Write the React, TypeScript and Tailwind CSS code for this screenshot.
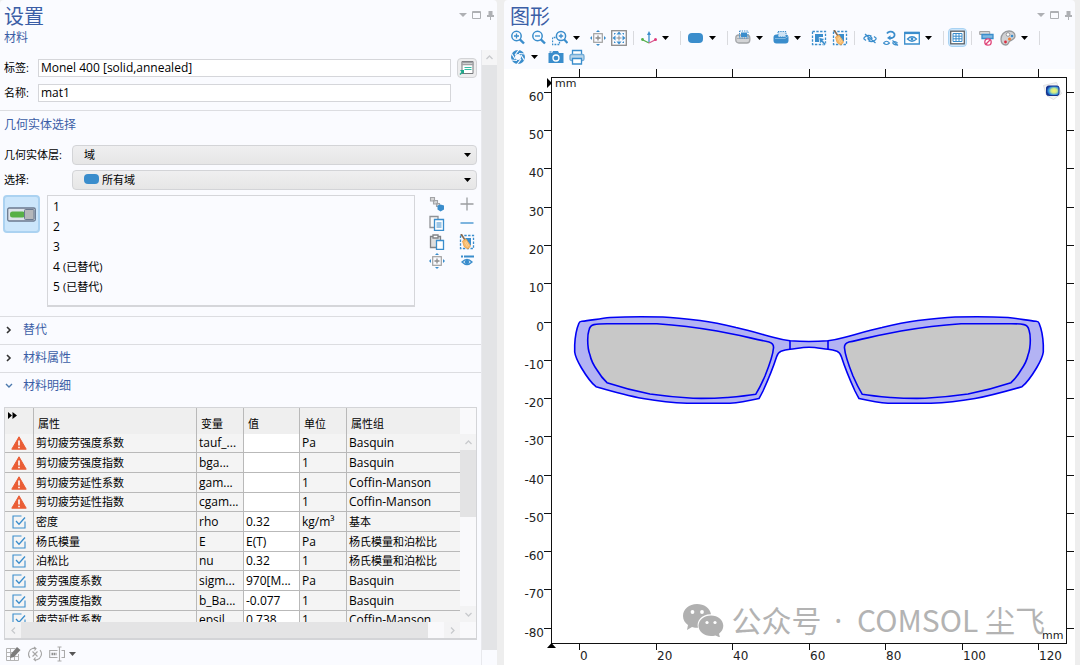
import React, {useState} from 'react';

const BLUE = '#3a8dcc';

const sections = ['替代', '材料属性'];

const rows = [
	{ok: false, name: '剪切疲劳强度系数', variable: 'tauf_...', value: '', unit: 'Pa', group: 'Basquin'},
	{ok: false, name: '剪切疲劳强度指数', variable: 'bga...', value: '', unit: '1', group: 'Basquin'},
	{ok: false, name: '剪切疲劳延性系数', variable: 'gam...', value: '', unit: '1', group: 'Coffin-Manson'},
	{ok: false, name: '剪切疲劳延性指数', variable: 'cgam...', value: '', unit: '1', group: 'Coffin-Manson'},
	{ok: true, name: '密度', variable: 'rho', value: '0.32', unit: 'kg/m³', group: '基本', cjk: true},
	{ok: true, name: '杨氏模量', variable: 'E', value: 'E(T)', unit: 'Pa', group: '杨氏模量和泊松比', cjk: true},
	{ok: true, name: '泊松比', variable: 'nu', value: '0.32', unit: '1', group: '杨氏模量和泊松比', cjk: true},
	{ok: true, name: '疲劳强度系数', variable: 'sigm...', value: '970[M...', unit: 'Pa', group: 'Basquin'},
	{ok: true, name: '疲劳强度指数', variable: 'b_Ba...', value: '-0.077', unit: '1', group: 'Basquin'},
	{ok: true, name: '疲劳延性系数', variable: 'epsil...', value: '0.738', unit: '1', group: 'Coffin-Manson'},
];

const Icon = ({children}: {children: React.ReactNode}) => (
	<svg className="h-4 w-4 shrink-0" viewBox="0 0 16 16" fill="none" stroke={BLUE} strokeWidth="1.3">
		{children}
	</svg>
);

const Caret = () => (
	<svg className="h-1 w-[7px]" viewBox="0 0 7 4"><path d="M0 0h7L3.5 4z" fill="#000" /></svg>
);

const Tool = ({label, menu, children}: {label: string; menu?: boolean; children: React.ReactNode}) => (
	<div className="flex h-[19px] items-center">
		<button aria-label={label} className="flex h-[19px] w-[21px] items-center justify-center">{children}</button>
		{menu && (
			<button aria-label={label + '菜单'} className="flex h-[19px] w-[17px] items-center pl-[3px]"><Caret /></button>
		)}
	</div>
);

const Divider = () => <span className="mx-1 h-[14px] w-px self-center bg-[#d9dade]" />;

const WindowButtons = () => (
	<div className="flex h-[30px] items-center gap-[5px] pr-[2px]">
		<button aria-label="菜单"><svg className="block h-1 w-2" viewBox="0 0 8 4"><path d="M0 0h8L4 4z" fill="#aeb0b4" /></svg></button>
		<button aria-label="最大化"><svg className="block h-2 w-[9px]" viewBox="0 0 9 8"><path d="M.5.5h8v7h-8zM0 1.5h9" fill="none" stroke="#aeb0b4" /></svg></button>
		<button aria-label="固定"><svg className="block h-[9px] w-[9px]" viewBox="0 0 9 9"><path d="M2.500 0h4v4H8v2H5v3H4V6H1V4h1.500z" fill="#aeb0b4" /></svg></button>
	</div>
);

const ZoomIcon = ({plus}: {plus?: boolean}) => (
	<Icon>
		<circle cx="6.500" cy="6" r="4.700" strokeWidth="1.500" />
		<path d="M9.800 9.300l4.200 4.200" strokeWidth="2.400" />
		<path d={plus ? 'M4 6h5M6.500 3.500v5' : 'M4 6h5'} />
	</Icon>
);

const CrossIcon = () => (
	<Icon>
		<rect x="3.700" y="3.700" width="8.600" height="8.600" stroke="#a0a0a0" strokeWidth="1.200" />
		<path d="M5.500 8h5M8 5.500v5" stroke="#8b8b8b" />
		<path d="M8 0l2 2H6zM8 16l2-2H6zM0 8l2-2v4zM16 8l-2-2v4z" fill={BLUE} stroke="none" />
	</Icon>
);

const BrushIcon = () => (
	<Icon>
		<rect x="1.500" y="1.500" width="13" height="13" strokeDasharray="2.400 1.400" />
		<path d="M6 4h6v8z" fill={BLUE} stroke="none" />
		<path d="M2 0l4 6" stroke="#8a6a4d" strokeWidth="1.600" />
		<path d="M3.500 7L7 5l4.500 7-2.500 3L5 12.500z" fill="#f8bb6c" stroke="#e79a3c" strokeWidth=".7" />
		<path d="M6 8l2.500 5M7 7l3 5" stroke="#fbe0b4" strokeWidth=".6" />
	</Icon>
);

const StatusIcon = ({ok}: {ok: boolean}) => ok ? (
	<svg className="mx-auto block h-[14px] w-[14px]" viewBox="0 0 14 14" fill="none" stroke={BLUE}>
		<path d="M9.500 1H1v12h12V6.500" strokeWidth="1.100" />
		<path d="M4 6l3 3.200L13 2.500" strokeWidth="1.300" />
	</svg>
) : (
	<svg className="mx-auto block h-[14px] w-4" viewBox="0 0 16 14">
		<path d="M8 .8L15.200 13.200H.8z" fill="#ea5d35" stroke="#ea5d35" strokeLinejoin="round" />
		<path d="M8 4.500v5M8 10.700v1.600" stroke="#fff" strokeWidth="1.600" />
	</svg>
);

const Chevron = ({d}: {d: string}) => (
	<svg className="h-[7px] w-[7px]" viewBox="0 0 7 7"><path d={d} fill="none" stroke="#c8cacd" strokeWidth="1.300" /></svg>
);
const UP = 'M.5 5l3-3 3 3';
const DOWN = 'M.5 2l3 3 3-3';
const LEFT = 'M5 .5l-3 3 3 3';
const RIGHT = 'M2 .5l3 3-3 3';

const PropertyTable = () => (
	<div className="mr-1 ml-1 border border-b-2 border-[#d3d4d7] bg-[#f9f9fb]">
		<div className="flex h-[214px]">
			<div className="min-w-0 flex-1 overflow-hidden">
				<table className="w-full table-fixed border-separate border-spacing-0 text-left">
					<colgroup>
						<col className="w-[29px]" />
						<col />
						<col className="w-[47px]" />
						<col className="w-[56px]" />
						<col className="w-[47px]" />
						<col className="w-[113px]" />
					</colgroup>
					<thead>
						<tr className="h-[26px] bg-[#efefef] text-[11px] leading-[14px] [&>th]:border-r [&>th]:border-[#b9b9b9] [&>th]:pt-[6px] [&>th]:pl-1 [&>th]:font-normal [&>th:last-child]:border-r-0">
							<th aria-label="状态" className="pt-1! pl-[3px]! align-top">
								<svg className="block h-[7px] w-[9px]" viewBox="0 0 9 7"><path d="M0 0l4 3.500L0 7zM4.500 0l4.500 3.500L4.500 7z" /></svg>
							</th>
							<th>属性</th>
							<th>变量</th>
							<th>值</th>
							<th>单位</th>
							<th>属性组</th>
						</tr>
					</thead>
					<tbody>
						{rows.map((row) => (
							<tr
								key={row.name}
								className="h-5 bg-[#f4f4f4] text-[12px] leading-4 whitespace-nowrap nth-[3n+1]:h-[19px] [&>td]:overflow-hidden [&>td]:border-r [&>td]:border-b [&>td]:border-[#b9b9b9] [&>td]:pl-[2px] [&>td:first-child]:pl-0 [&>td:last-child]:border-r-0"
							>
								<td><StatusIcon ok={row.ok} /></td>
								<td className="text-[11px]">{row.name}</td>
								<td>{row.variable}</td>
								<td className="bg-white">{row.value}</td>
								<td>{row.unit}</td>
								<td className={row.cjk ? 'text-[11px]' : ''}>{row.group}</td>
							</tr>
						))}
					</tbody>
				</table>
			</div>
			<div className="flex w-4 flex-col pt-[26px]">
				<button aria-label="向上" className="flex h-4 items-center justify-center bg-[#f3f3f4]"><Chevron d={UP} /></button>
				<div className="h-[67px] bg-[#e3e3e4]" />
				<div className="flex-1" />
				<button aria-label="向下" className="flex h-4 items-center justify-center bg-[#f3f3f4]"><Chevron d={DOWN} /></button>
			</div>
		</div>
		<div className="flex h-4 pr-4">
			<button aria-label="向左" className="flex w-4 items-center justify-center bg-[#f3f3f4]"><Chevron d={LEFT} /></button>
			<div className="flex-1 bg-[#e4e4e5]" />
			<div className="w-4" />
			<button aria-label="向右" className="flex w-4 items-center justify-center bg-[#f3f3f4]"><Chevron d={RIGHT} /></button>
		</div>
	</div>
);

const Blob = () => <span className="block h-[10px] w-[15px] rounded-[4px] bg-[#3a8dcc]" />;

const Settings = () => {
	const [label, setLabel] = useState('Monel 400 [solid,annealed]');
	const [name, setName] = useState('mat1');

	return (
		<section className="flex flex-col rounded-t bg-[#fafbff]">
			<header className="flex h-[50px] justify-between pl-1">
				<div className="text-[#3b5ea6]">
					<h1 className="pt-1 text-[20px] leading-[26px]">设置</h1>
					<p className="text-[12px] leading-4">材料</p>
				</div>
				<WindowButtons />
			</header>
			<div className="flex flex-1">
				<div className="min-w-0 flex-1 border-r border-[#e8e9ed]">
					<div className="grid grid-cols-[34px_1fr_20px] items-center gap-y-[7px] pt-[9px] pr-1 pb-2 pl-1">
						<label htmlFor="label" className="text-[11px]">标签:</label>
						<input id="label" className="mr-[6px] h-[18px] border border-[#d5d6da] bg-white px-[2px] text-[12px]" value={label} onChange={(e) => setLabel(e.target.value)} />
						<button aria-label="转到源" className="-my-px flex h-5 w-5 items-center justify-center rounded-sm border border-[#d3d4d7] bg-[#ededee]">
							<svg className="h-4 w-4" viewBox="0 0 16 16" fill="none">
								<path d="M3 1.500h11v12H3z" fill="#fff" stroke="#77797d" />
								<path d="M2.500 2.500h12M2.500 4.500h12" stroke="#a0a1a4" strokeWidth="1.500" />
								<path d="M5.500 7.500h7M5.500 9.500h7" stroke="#36bda4" />
								<path d="M1 10h4v4l-1.300-1.300L1.500 15 .5 14l2-2z" fill="#1ca88a" />
							</svg>
						</button>
						<label htmlFor="name" className="text-[11px]">名称:</label>
						<input id="name" className="mr-[6px] h-[18px] border border-[#d5d6da] bg-white px-[2px] text-[12px]" value={name} onChange={(e) => setName(e.target.value)} />
					</div>
					<div className="border-t border-[#dcdde1] pr-1 pb-[9px]">
						<h2 className="py-[5px] pl-1 text-[12px] leading-[18px] text-[#3b5ea6]">几何实体选择</h2>
						<div className="grid grid-cols-[68px_1fr] items-center gap-y-[5px] pt-[6px] pl-1 text-[11px]">
							<label htmlFor="level">几何实体层:</label>
							<div className="relative">
								<select id="level" className="block h-5 w-full appearance-none rounded-sm border border-[#d3d4d7] bg-linear-to-b from-[#efeff0] to-[#e6e6e6] pl-[11px]">
									<option>域</option>
								</select>
								<span className="pointer-events-none absolute top-2 right-[6px]"><Caret /></span>
							</div>
							<label htmlFor="selection">选择:</label>
							<div className="relative">
								<select id="selection" className="block h-5 w-full appearance-none rounded-sm border border-[#d3d4d7] bg-linear-to-b from-[#efeff0] to-[#e6e6e6] pl-[29px]">
									<option>所有域</option>
								</select>
								<span className="pointer-events-none absolute top-1 left-3"><Blob /></span>
								<span className="pointer-events-none absolute top-2 right-[6px]"><Caret /></span>
							</div>
						</div>
						<div className="flex items-start pt-[5px] pr-[2px] pl-[3px]">
							<button aria-label="激活选择" className="flex h-[38px] w-[37px] items-center justify-center rounded-sm border-2 border-[#abd2f1] bg-[#cce6fb]">
								<svg className="h-[15px] w-[29px]" viewBox="0 0 29 15">
									<rect x=".7" y="1" width="27.600" height="13" rx="1.500" fill="#dce3ea" stroke="#6b7a90" strokeWidth="1.300" />
									<rect x="3" y="4.500" width="15" height="6" rx="2.500" fill="#57b046" />
									<rect x="17.500" y="2.500" width="9.500" height="10" rx="1" fill="#b5b7ba" stroke="#6b7a90" />
								</svg>
							</button>
							<ul className="ml-[7px] h-[112px] min-w-0 flex-1 border border-b-2 border-[#d5d6da] px-[5px] pt-px text-[12px] leading-5">
								<li>1</li>
								<li>2</li>
								<li>3</li>
								<li>4 <span className="text-[11px]">(已替代)</span></li>
								<li>5 <span className="text-[11px]">(已替代)</span></li>
							</ul>
							<div className="ml-[14px] grid grid-cols-[16px_16px] gap-x-[14px] gap-y-[3px] pt-px">
								<button aria-label="创建选择">
									<Icon>
										<path d="M1.500 1.500h4v3.500h-4zM4.500 4.500h4v3.500h-4zM7.500 7.500h3v3h-3z" fill="#d7d7d7" stroke="#a3a4a7" strokeWidth="1.100" />
										<path d="M8.500 9.500l3-1 3.500 1v4l-3.500 2-3-2z" fill={BLUE} stroke="none" />
									</Icon>
								</button>
								<button aria-label="添加到选择"><Icon><path d="M8 1.500v13M1.500 8h13" stroke="#9b9da0" /></Icon></button>
								<button aria-label="复制选择">
									<Icon>
										<path d="M1 1.500h8v11H1z" fill="#fafafa" stroke="#909296" />
										<path d="M5.500 4.500h9v11h-9z" fill="#fff" />
										<path d="M7.500 8h5M7.500 10h5M7.500 12h5" strokeWidth="1" />
									</Icon>
								</button>
								<button aria-label="从选择中移除"><Icon><path d="M1.500 8h13" /></Icon></button>
								<button aria-label="粘贴选择">
									<Icon>
										<path d="M1.500 2.500h10v11h-10z" fill="#dedede" stroke="#808286" />
										<path d="M4 1h5v3H4z" fill="#fff" stroke="#808286" />
										<path d="M7.500 6.500h7v9h-7z" fill="#fff" />
									</Icon>
								</button>
								<button aria-label="清除选择"><BrushIcon /></button>
								<button aria-label="缩放到选择"><CrossIcon /></button>
								<button aria-label="显示选择">
									<Icon>
										<path d="M2 3.500h2M5 3.500h10" strokeWidth="2" />
										<path d="M3 9q5-5 10 0-5 5-10 0z" fill="#cde2f2" />
										<circle cx="8" cy="9" r="1.500" fill={BLUE} />
									</Icon>
								</button>
							</div>
						</div>
					</div>
					{sections.map((title) => (
						<button key={title} aria-expanded="false" className="flex h-7 w-full items-center border-t border-[#dcdde1] pb-[2px] pl-[6px] text-[12px] text-[#3b5ea6]">
							<svg className="mr-[11px] h-2 w-[6px]" viewBox="0 0 6 8"><path d="M1 1l3 3-3 3" fill="none" stroke="#333" strokeWidth="1.600" /></svg>
							{title}
						</button>
					))}
					<button aria-expanded="true" className="flex h-[35px] w-full items-center border-t border-[#dcdde1] pb-[9px] pl-[5px] text-[12px] text-[#3b5ea6]">
						<svg className="mr-[10px] h-[6px] w-2" viewBox="0 0 8 6"><path d="M1 1l3 3 3-3" fill="none" stroke="#4c79ad" strokeWidth="1.400" /></svg>
						材料明细
					</button>
					<PropertyTable />
					<div className="flex items-center gap-[6px] pt-[6px] pl-[5px]">
						<button aria-label="编辑"><Icon>
							<path d="M1.500 2.500h9M1.500 2.500v12h12V8M1.500 6.500h8M1.500 10.500h12M5.500 2.500v12M9.500 8v6.500" stroke="#b4b4b4" strokeWidth="1" />
							<path d="M5 12l1-4 6-7 3.500 3-6.500 7z" fill="#7c7c7c" stroke="none" />
						</Icon></button>
						<button aria-label="重置"><Icon>
							<path d="M3 12A6 6 0 0 1 6 2.300l3 .2M13 4a6 6 0 0 1-3 9.700l-3-.2M7 1l2 1.500L7.500 4.500M9 15l-2-1.500 1.500-2M5.500 5.500l5 5M10.500 5.500l-5 5" stroke="#a5a5a5" strokeWidth="1.100" />
						</Icon></button>
						<div className="flex items-center gap-1">
							<button aria-label="重命名"><Icon>
								<path d="M8.500 4.500H.7v7h7.800M12.500 4.500h3v7h-3M10.500 1v14M8.500 1h4M8.500 15h4" stroke="#aaa" strokeWidth="1.100" />
								<path d="M2.500 8h5" stroke="#8f8f8f" strokeWidth="2.500" strokeDasharray="1.500 .5" />
							</Icon></button>
							<button aria-label="更多">
								<svg className="h-1 w-[7px]" viewBox="0 0 7 4"><path d="M0 0h7L3.500 4z" fill="#555" /></svg>
							</button>
						</div>
					</div>
				</div>
				<div className="flex w-[15px] flex-col">
					<button aria-label="向上滚动" className="flex h-[15px] items-center justify-center bg-[#f5f5f6]"><Chevron d={UP} /></button>
					<div className="flex-1 bg-[#e3e4e6]" />
					<div className="h-[15px]" />
				</div>
			</div>
		</section>
	);
};

const Toolbar = () => (
	<div className="flex flex-wrap pb-[3px] pl-[3px]">
		<Tool label="放大"><ZoomIcon plus /></Tool>
		<Tool label="缩小"><ZoomIcon /></Tool>
		<Tool label="框选缩放" menu>
			<Icon>
				<circle cx="9" cy="6" r="4.600" strokeWidth="1.500" />
				<path d="M12 9.200l3.500 3.800" strokeWidth="2.200" />
				<path d="M6.800 6h4.400M9 3.800v4.400" />
				<path d="M3.500 7.500h-3v7h7v-3" strokeDasharray="1.800 1.200" />
			</Icon>
		</Tool>
		<Tool label="缩放到选择"><CrossIcon /></Tool>
		<Tool label="缩放到窗口大小">
			<Icon>
				<rect x=".7" y=".7" width="14.600" height="14.600" stroke="#8b8b8b" />
				<path d="M5.500 8h5M8 5.500v5" stroke="#8b8b8b" strokeWidth="1" />
				<path d="M8 1.500l2.500 3h-5zM8 14.500l2.500-3h-5zM1.500 8l3-2.500v5zM14.500 8l-3-2.500v5zM3 3h2L3 5zM13 3h-2l2 2zM3 13h2l-2-2zM13 13h-2l2-2z" fill={BLUE} stroke="none" />
			</Icon>
		</Tool>
		<Divider />
		<Tool label="转到默认视图" menu>
			<Icon>
				<path d="M8 12V3" />
				<path d="M8 1L6 5h4z" fill={BLUE} stroke="none" />
				<path d="M8 13l-6-3" stroke="#53b04a" />
				<circle cx="1.500" cy="9.500" r="1.400" fill="#53b04a" stroke="none" />
				<path d="M8 13l6-3" stroke="#d7568b" />
				<circle cx="14.500" cy="9.500" r="1.500" fill="#e0387a" stroke="none" />
			</Icon>
		</Tool>
		<Divider />
		<Tool label="选择域" menu><Blob /></Tool>
		<Divider />
		<Tool label="选择框" menu>
			<Icon>
				<rect x=".8" y="5" width="14" height="8" rx="3" fill="#d3d4d6" stroke="#a3a5a8" />
				<path d="M2 8.500h12" stroke="#a3a5a8" strokeWidth=".8" />
				<rect x="6" y="2.500" width="6" height="4.500" fill={BLUE} stroke="none" />
				<rect x="4.500" y="1" width="8.500" height="7" strokeWidth="1" strokeDasharray="1.300 1" />
			</Icon>
		</Tool>
		<Tool label="取消选择框" menu>
			<Icon>
				<rect x=".5" y="4.500" width="15" height="9" rx="3" fill={BLUE} stroke="none" />
				<rect x="5" y="1.500" width="8" height="5.500" fill="#cfe3f4" strokeWidth="1" strokeDasharray="1.300 1" />
				<path d="M2 8.500h10l3-2" stroke="#8fc1e6" strokeWidth=".8" />
			</Icon>
		</Tool>
		<Tool label="全选">
			<Icon>
				<rect x="1.500" y="1.500" width="13" height="13" strokeDasharray="2.400 1.400" />
				<path d="M4 4h8v3H8v5H4z" fill={BLUE} stroke="none" />
				<path d="M8 7.500l6 1.500-2.200 1.300L15 14l-1.500 1.500-3-3.500-1.500 2z" fill={BLUE} stroke="#fff" strokeWidth=".5" />
			</Icon>
		</Tool>
		<Tool label="清除选择"><BrushIcon /></Tool>
		<Divider />
		<Tool label="隐藏">
			<Icon>
				<path d="M1.500 8.500q3-4.500 8-2.500M14.500 8.500q-3 4.500-8 2.500M12 6.500l2.500 2M4 10.500l-2.500-2" strokeWidth="1.200" />
				<path d="M6 7.500q0 2.500 2.500 3M10 9q0-2-2-2.500" strokeWidth="1.500" />
				<path d="M3 4l10.500 9" strokeWidth="1.300" />
			</Icon>
		</Tool>
		<Tool label="重置隐藏">
			<Icon>
				<path d="M4 3.500a4 3.300 0 1 1 5 4.500l-2 .1" strokeWidth="1.800" />
				<path d="M7.500 5.300v5L4 8z" fill={BLUE} stroke="none" />
				<path d="M.5 13q3-3.500 6 0-3 3-6 0zM9.500 13q2-3 5 0M9.500 13q3 3 5 1M9.500 10.500l5.500 5" strokeWidth="1.100" />
			</Icon>
		</Tool>
		<Tool label="视图" menu>
			<Icon>
				<path d="M.7 2.500h14.600v11.500H.7z" fill="#fff" />
				<path d="M.7 3h14.600" strokeWidth="2.200" />
				<path d="M3.500 9q4.500-4.500 9 0-4.500 4.500-9 0z" />
				<circle cx="8" cy="9" r="1.400" fill={BLUE} stroke="none" />
			</Icon>
		</Tool>
		<Divider />
		<button aria-label="显示栅格" className="flex size-[19px] items-center justify-center rounded-sm border border-[#a9d3f3] bg-[#cce6fb]">
			<svg className="h-[15px] w-[15px]" viewBox="0 0 15 15" fill="none">
				<rect x=".7" y="1.200" width="13.600" height="12.600" fill="#fff" stroke="#5f6266" strokeWidth="1.300" />
				<path d="M3 3.500h9v8H3zM6 3.500v8M9 3.500v8M3 6.200h9M3 8.800h9" stroke={BLUE} />
			</svg>
		</button>
		<Divider />
		<Tool label="隐藏标签">
			<Icon>
				<path d="M.7 1.500h10v3h-10z" fill="#d8d8d8" stroke="#a1a1a1" strokeWidth="1" />
				<path d="M3 4.500h11v4H3z" fill="#7fb9e2" />
				<circle cx="9" cy="12" r="3.200" fill="#fff" stroke="#e0457a" strokeWidth="1.300" />
				<path d="M7 14l4-4" stroke="#e0457a" />
			</Icon>
		</Tool>
		<Tool label="颜色" menu>
			<Icon>
				<path d="M9 1c-5 0-8 4-8 8s2 6 5 6 2-3 4-4 5-2 5-5-2-5-6-5z" fill="#d0d1d3" stroke="#97999c" />
				<circle cx="8" cy="4.500" r="1.800" fill="#fff" stroke="#85878a" strokeWidth=".8" />
				<circle cx="12" cy="6" r="1.300" fill={BLUE} stroke="none" />
				<circle cx="9.500" cy="9" r="1.500" fill="#ef7b35" stroke="none" />
				<circle cx="5.500" cy="12" r="1.400" fill="#d92e3f" stroke="none" />
			</Icon>
		</Tool>
		<Divider />
		<Tool label="图像快照" menu>
			<Icon>
				<circle cx="8" cy="8" r="5" strokeWidth="4" />
				<path d="M9.500 0L5 6M15.500 5L9 4.500M14.500 11.500L11 6M6.500 16l4.500-6M.5 11l6.500.5M1.500 4.500L5 10" stroke="#fafbff" strokeWidth="1.200" />
			</Icon>
		</Tool>
		<Tool label="相机">
			<Icon>
				<path d="M.5 4H4l1-2h5l1 2h4.500v10H.5z" fill={BLUE} stroke="none" />
				<circle cx="8" cy="9" r="3" stroke="#fff" />
				<path d="M1.500 3h2" />
			</Icon>
		</Tool>
		<Tool label="打印">
			<Icon>
				<path d="M3.500 6V1.500h9V6" fill="#fff" />
				<rect x="1" y="5.500" width="14" height="6" rx="1.500" fill="#b9d5ea" stroke="#6fabd8" />
				<path d="M3.500 9.500h9v5.500h-9z" fill="#fff" />
			</Icon>
		</Tool>
	</div>
);

const xTicks = [0, 20, 40, 60, 80, 100, 120].map((v) => ({v, x: Math.round(579 + v * 3.825) + 0.5}));
const yTicks = [60, 50, 40, 30, 20, 10, 0, -10, -20, -30, -40, -50, -60, -70, -80].map((v) => ({v, y: Math.round(321.5 - v * 3.828) + 0.5}));

// left half of the frame, the right one is the same mirrored about x = 809
const FRAME = 'M809 341.500C802 341.500 796 341.200 790 340.700C784 340 779 339 773 337.300C761 334 748 330 736 327.500C724 324.500 712 322 700 320.500C688 319 675 317.500 663 317C645 316.500 627 316.500 610 317.500C600 318.500 590 320.500 582 321.300Q579.500 321.500 579 323C576.500 329 575 338 574.700 345V352C575.500 358 578 362 581.500 368C586 375.500 590 382 596 386.700C611 391 627 395.500 643 398.500C657 401 672 402.800 687 403.200H730C741 402.500 750 400.500 759 398.500Q761 395 763 391C768 380 773 368 776.500 357Q778 352.500 781 351.300Q785 350 790 349.300C797 348.500 802 347.300 809 347.300Z';
const LENS = 'M594 324.600C598 323.700 602 323.700 607 323.700H657C677 325 697 327.500 717 331C735 334 752 338.500 769 342Q774 343.500 773.500 348C773 355 769 366 765 376C762 383 759 389 755.700 394.300C746 396 737 396.700 727 397.500C716 398.300 705 398.500 693 398.300C679 397.500 664 396 650 394C635 391 620 387 607 382.700C603 379 600 375 597 370C593.500 365 591 360 590 355C588 350 587.700 345 587.700 340Q587.700 334 589 330Q590 325.500 594 324.600Z';

const Plot = () => (
	<div className="relative bg-white">
		<svg className="block w-full" viewBox="504 69 571 596" role="img" aria-label="眼镜框几何">
			<g stroke="#111" strokeWidth="1" shapeRendering="crispEdges">
				<rect x="551.500" y="77.500" width="515" height="566" fill="none" />
				{xTicks.map(({v, x}) => <path key={v} d={`M${x} 69v8M${x} 644v6`} />)}
				{yTicks.map(({v, y}) => <path key={v} d={`M544 ${y}h7M1067 ${y}h7`} />)}
			</g>
			<path d="M547 78v10l5-5zM547 648h9l-4.500-5z" />
			<g className="font-['DejaVu_Sans'] text-[12px]" fill="#222">
				{xTicks.map(({v, x}) => <text key={v} x={x + 0.5} y="660">{v}</text>)}
				{yTicks.map(({v, y}) => <text key={v} x="544" y={y + 8.5} textAnchor="end">{v}</text>)}
			</g>
			{['', 'matrix(-1 0 0 1 1618 0)'].map((transform) => (
				<g key={transform} transform={transform} stroke="#0000f5" strokeWidth="1.600">
					<path d={FRAME} fill="#b3b3f3" stroke="none" />
					<path d={FRAME.replace('Z', '')} fill="none" />
					<path d={LENS} fill="#c8c8c8" />
					<path d="M790 340.500v9" />
				</g>
			))}
			<g transform="translate(1052.500 90.500)">
				<path d="M-9-5l13-3 5 11-8 6-7-4z" fill="#f4f4f4" stroke="#e2e2e2" />
				<defs>
					<radialGradient id="cube" cx=".6" cy=".5" r=".6">
						<stop offset="0" stopColor="#fff36a" />
						<stop offset=".4" stopColor="#c8e98a" />
						<stop offset=".75" stopColor="#2f8fe0" />
						<stop offset="1" stopColor="#14338f" />
					</radialGradient>
				</defs>
				<rect x="-6" y="-4.500" width="12.500" height="9.500" rx="2" fill="url(#cube)" stroke="#14338f" />
			</g>
			<g className="font-['DejaVu_Sans'] text-[11px]" fill="#222">
				<text x="555" y="87">mm</text>
				<text x="1042" y="639">mm</text>
			</g>
		</svg>
		<div className="absolute right-[30px] bottom-[27px] flex h-9 items-center gap-2 text-[30px] leading-9 whitespace-nowrap text-[#b3b3b3]">
			<svg className="h-[34px] w-[42px]" viewBox="0 0 42 34" fill="#b0b0b0">
				<path d="M15 1C7 1 1 6 1 13c0 4 2 7 5 9l-1 5 5-3c2 .7 4 .8 6 .8-2-7 4-13.800 13-13.500C28 5 22 1 15 1z" />
				<path d="M29 12.500c-7 0-12.500 4.500-12.500 10.300S22 33 29 33c1.500 0 3-.2 4.500-.6L38 34.500l-1-3.800c2.700-2 4.300-4.700 4.300-7.900 0-5.800-5.300-10.300-12.300-10.300z" />
				<g fill="#fff">
					<circle cx="10.500" cy="9" r="1.900" />
					<circle cx="20" cy="9" r="1.900" />
					<circle cx="25" cy="19.500" r="1.600" />
					<circle cx="33" cy="19.500" r="1.600" />
				</g>
			</svg>
			<span className="font-['Noto_Sans_CJK_SC',sans-serif] font-normal">
				公众号 <span className="pr-2 pl-[6px] font-['Noto_Sans']">·</span> COMSOL 尘飞
			</span>
		</div>
	</div>
);

const App = () => (
	<main className="grid min-h-screen grid-cols-[497px_minmax(0,1fr)] gap-[7px] bg-[#eeeeee] pr-[5px] font-['Open_Sans','Noto_Sans_CJK_SC',sans-serif] text-black">
		<Settings />
		<section className="rounded-t bg-[#fafbff]">
			<header className="flex h-7 justify-between pl-[6px]">
				<h1 className="pt-1 text-[20px] leading-[26px] text-[#3b5ea6]">图形</h1>
				<WindowButtons />
			</header>
			<Toolbar />
			<Plot />
		</section>
	</main>
);

export default App;
